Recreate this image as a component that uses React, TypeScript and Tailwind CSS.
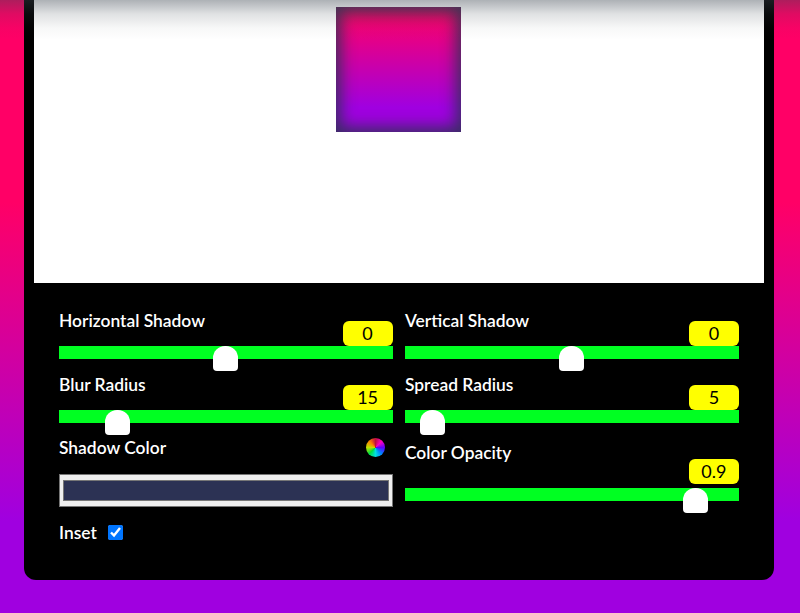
function Slider({ label, value, min, max, step, last }: { label: string; value: number; min: number; max: number; step?: number; last?: boolean }) {
  return (
    <div className="flex flex-col">
      <label className={last ? 'h-[25px] text-[17.4px] font-semibold leading-[25px] text-white' : 'h-[25px] text-[17.4px] font-semibold leading-[27px] text-white'}>{label}</label>
      <div className={last ? '-mt-[6px] mb-[4.5px] flex justify-end' : '-mt-[11px] flex justify-end'}>
        <span className="flex h-[25px] w-[50px] items-center justify-center rounded-[6px] bg-[#ffff00] text-[18px] text-black">{value}</span>
      </div>
      <input
        type="range"
        readOnly
        min={min}
        max={max}
        step={step}
        value={value}
        className="block h-[13px] w-full cursor-pointer appearance-none bg-[#00ff22] outline-none [&::-webkit-slider-thumb]:mt-[12px] [&::-webkit-slider-thumb]:h-[25px] [&::-webkit-slider-thumb]:w-[25px] [&::-webkit-slider-thumb]:appearance-none [&::-webkit-slider-thumb]:rounded-t-[12px] [&::-webkit-slider-thumb]:rounded-b-[4px] [&::-webkit-slider-thumb]:bg-white"
      />
    </div>
  );
}

export default function App() {
  return (
    <div className="relative h-[613px] overflow-hidden bg-[linear-gradient(#ff0066_33%,#a000e0_85%)] px-6 font-['Lato',sans-serif]">
      <div className="pointer-events-none absolute inset-x-0 top-0 z-10 h-[40px] bg-[linear-gradient(rgba(60,70,80,0.42),rgba(60,70,80,0.16)_35%,rgba(60,70,80,0.04)_70%,rgba(60,70,80,0)_100%)]" />
      <div className="h-[580px] w-[750px] rounded-b-[12px] bg-black px-2.5">
        <div className="flex h-[283px] justify-center bg-white pr-px pt-[7px]">
          <div className="h-[125px] w-[125px] bg-[linear-gradient(#ff0066_5%,#a000e0_80%)] shadow-[inset_0_0_15px_5px_rgba(44,50,84,0.9)]" />
        </div>
        <div className="grid grid-cols-[333.6px_333.9px] gap-x-[12.4px] px-[25px] pt-[24px]">
          <div className="flex flex-col gap-[11.5px]">
            <Slider label="Horizontal Shadow" value={0} min={-100} max={100} />
            <Slider label="Blur Radius" value={15} min={0} max={100} />
            <div>
              <div className="flex h-[25.5px] items-center justify-between pt-[2px]">
                <span className="text-[17.4px] font-semibold text-white">Shadow Color</span>
                <span className="mr-[8px] h-[19px] w-[19px] rounded-full bg-[conic-gradient(#c01040,#ff00c0,#6000ff,#0080ff,#00e0e0,#00e040,#c0e000,#ff8000,#c01040)] blur-[0.7px]" />
              </div>
              <input type="color" readOnly value="#2c3254" className="mt-[14.5px] block h-[32.5px] w-full border border-[#767676] bg-[#efefef] px-[1px] py-[1px]" />
              <div className="mt-[13.5px] flex h-[25.5px] items-center gap-[11px]">
                <span className="text-[17.4px] font-semibold text-white">Inset</span>
                <input type="checkbox" readOnly checked className="h-[15px] w-[15px]" />
              </div>
            </div>
          </div>
          <div className="flex flex-col gap-[11.5px]">
            <Slider label="Vertical Shadow" value={0} min={-100} max={100} />
            <Slider label="Spread Radius" value={5} min={0} max={100} />
            <div className="mt-[5.5px]">
              <Slider label="Color Opacity" value={0.9} min={0} max={1} step={0.1} last />
            </div>
          </div>
        </div>
      </div>
    </div>
  );
}
